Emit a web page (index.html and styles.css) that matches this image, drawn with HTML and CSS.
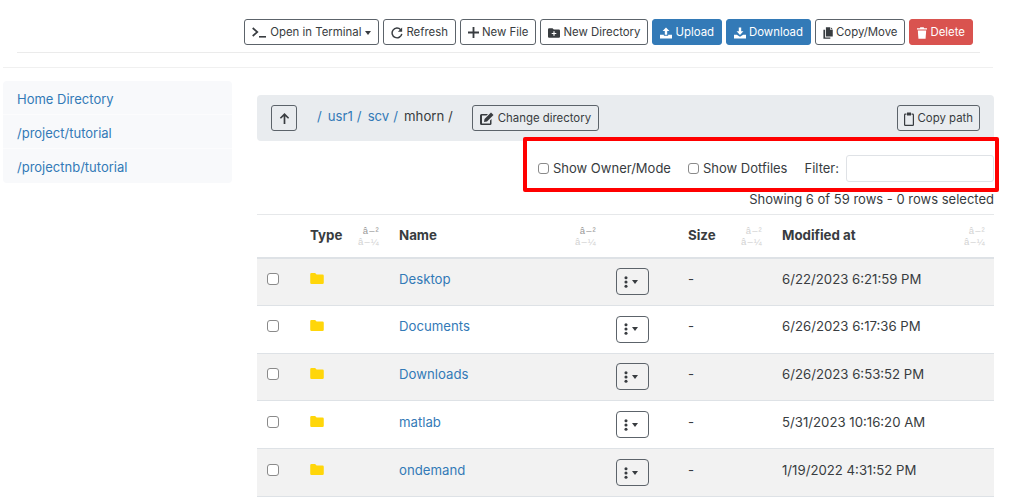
FILE: index.html
```html
<!DOCTYPE html>
<html lang="en">
<head>
<meta charset="utf-8">
<title>Files</title>
<link rel="stylesheet" href="styles.css">
</head>
<body>
<svg class="defs" width="0" height="0">
  <symbol id="folder" viewBox="0 0 16 13"><path d="M1.500 0h4.300l1.700 1.800h7A1.500 1.500 0 0 1 16 3.300v8.200a1.500 1.500 0 0 1-1.500 1.500h-13A1.500 1.500 0 0 1 0 11.500V1.500A1.500 1.500 0 0 1 1.500 0z"/></symbol>
  <symbol id="dots" viewBox="0 0 4 14"><circle cx="2" cy="2" r="1.800"/><circle cx="2" cy="7" r="1.800"/><circle cx="2" cy="12" r="1.800"/></symbol>
</svg>
<header class="toolbar">
  <button class="btn"><svg class="ico wide" viewBox="0 0 14 11"><path d="M.7 1l4.600 4-4.600 4" fill="none" stroke="currentColor" stroke-width="1.700"/><path d="M7 9h7v1.600H7z"/></svg>Open in Terminal<span class="caret"></span></button>
  <button class="btn"><svg class="ico" viewBox="0 0 14 14"><path d="M11.300 3.200A5.700 5.700 0 1 0 12.600 8" fill="none" stroke="currentColor" stroke-width="1.700"/><path d="M13 .5v5H8z"/></svg>Refresh</button>
  <button class="btn"><svg class="ico small" viewBox="0 0 12 12"><path d="M5 0h2v5h5v2H7v5H5V7H0V5h5z"/></svg>New File</button>
  <button class="btn"><svg class="ico" viewBox="0 0 14 12"><path fill-rule="evenodd" d="M1.300.5h4l1.400 1.500h6A1.300 1.300 0 0 1 14 3.300v7a1.300 1.300 0 0 1-1.300 1.300H1.300A1.300 1.300 0 0 1 0 10.300V1.800A1.300 1.300 0 0 1 1.300.5zM6.300 4v2h-2v1.300h2v2h1.400v-2h2V6h-2V4z"/></svg>New Directory</button>
  <button class="btn primary"><svg class="ico" viewBox="0 0 14 13"><path d="M7 0l4 4.200H8.400v4.300H5.600V4.200H3z"/><path d="M0 8.500h4.500v1.300h5V8.500H14V13H0z"/></svg>Upload</button>
  <button class="btn primary"><svg class="ico" viewBox="0 0 14 13"><path d="M5.600 0h2.800v4.600H11L7 8.800 3 4.600h2.600z"/><path d="M0 8.500h3.300L7 11l3.700-2.500H14V13H0z"/></svg>Download</button>
  <button class="btn"><svg class="ico narrow" viewBox="0 0 12 14"><path d="M3.500 0h5v3.200h3.200v8H3.500z"/><path d="M9.300 0l2.400 2.400H9.300z"/><path d="M.5 3h2v9.300h6.300V14H.5z"/></svg>Copy/Move</button>
  <button class="btn danger"><svg class="ico narrow" viewBox="0 0 12 14"><path d="M4 0h4l.6 1.300H12v1.600H0V1.300h3.400z"/><path d="M1 4h10l-.7 10H1.700z"/></svg>Delete</button>
</header>
<hr class="rule">
<div class="columns">
  <nav class="side">
    <a class="side-item" href="#">Home Directory</a>
    <a class="side-item" href="#">/project/tutorial</a>
    <a class="side-item" href="#">/projectnb/tutorial</a>
  </nav>
  <main class="main">
    <section class="crumbs">
      <button class="btn up"><svg class="ico solo" viewBox="0 0 12 13"><path d="M6 0l5.500 5.500-1.300 1.300L7 3.700V13H5V3.700L1.800 6.800.5 5.500z"/></svg></button>
      <ol class="path">
        <li><span class="sep">/</span></li>
        <li><a href="#">usr1</a><span class="sep">/</span></li>
        <li><a href="#">scv</a><span class="sep">/</span></li>
        <li>mhorn /</li>
      </ol>
      <button class="btn"><svg class="ico edit" viewBox="0 0 14 13"><path d="M1.500 2H8L6.500 3.500H2v8h8v-3L11.500 7v5A1.500 1.500 0 0 1 10 13H1.500A1.500 1.500 0 0 1 0 11.500v-8A1.500 1.500 0 0 1 1.500 2z"/><path d="M11 .5L13.500 3 7 9.500l-3 .5.5-3z"/></svg>Change directory</button>
      <button class="btn copy"><svg class="ico clip" viewBox="0 0 10 14"><path fill="none" stroke="currentColor" stroke-width="1.200" d="M2.500 2.200H1.300a.7.700 0 0 0-.7.700v9.800a.7.700 0 0 0 .7.700h7.400a.7.700 0 0 0 .7-.7V2.900a.7.700 0 0 0-.7-.7H7.500"/><path d="M3 .5h4v3H3z"/></svg>Copy path</button>
    </section>
    <div class="filters">
      <label class="check"><input type="checkbox">Show Owner/Mode</label>
      <label class="check"><input type="checkbox">Show Dotfiles</label>
      <label class="filter">Filter:<input type="text"></label>
      <div class="highlight"></div>
    </div>
    <p class="status">Showing 6 of 59 rows - 0 rows selected</p>
    <table class="files">
      <colgroup><col class="c1"><col class="c2"><col class="c3"><col class="c4"><col class="c5"><col class="c6"></colgroup>
      <thead>
        <tr>
          <th></th>
          <th><div class="th">Type<span class="sort"><b>â–²</b><i>â–¼</i></span></div></th>
          <th><div class="th">Name<span class="sort"><b>â–²</b><i>â–¼</i></span></div></th>
          <th></th>
          <th><div class="th">Size<span class="sort off"><b>â–²</b><i>â–¼</i></span></div></th>
          <th><div class="th">Modified at<span class="sort off"><b>â–²</b><i>â–¼</i></span></div></th>
        </tr>
      </thead>
      <tbody>
        <tr><td><input type="checkbox"></td><td><svg class="folder"><use href="#folder"/></svg></td><td><a href="#">Desktop</a></td><td><button class="btn more"><svg class="dots"><use href="#dots"/></svg><span class="caret"></span></button></td><td>-</td><td>6/22/2023 6:21:59 PM</td></tr>
        <tr><td><input type="checkbox"></td><td><svg class="folder"><use href="#folder"/></svg></td><td><a href="#">Documents</a></td><td><button class="btn more"><svg class="dots"><use href="#dots"/></svg><span class="caret"></span></button></td><td>-</td><td>6/26/2023 6:17:36 PM</td></tr>
        <tr><td><input type="checkbox"></td><td><svg class="folder"><use href="#folder"/></svg></td><td><a href="#">Downloads</a></td><td><button class="btn more"><svg class="dots"><use href="#dots"/></svg><span class="caret"></span></button></td><td>-</td><td>6/26/2023 6:53:52 PM</td></tr>
        <tr><td><input type="checkbox"></td><td><svg class="folder"><use href="#folder"/></svg></td><td><a href="#">matlab</a></td><td><button class="btn more"><svg class="dots"><use href="#dots"/></svg><span class="caret"></span></button></td><td>-</td><td>5/31/2023 10:16:20 AM</td></tr>
        <tr><td><input type="checkbox"></td><td><svg class="folder"><use href="#folder"/></svg></td><td><a href="#">ondemand</a></td><td><button class="btn more"><svg class="dots"><use href="#dots"/></svg><span class="caret"></span></button></td><td>-</td><td>1/19/2022 4:31:52 PM</td></tr>
      </tbody>
    </table>
  </main>
</div>
</body>
</html>
```
FILE: styles.css
```css
* { box-sizing: border-box; }
html, body { height: 100%; overflow: hidden; }
body {
  margin: 0;
  background: #fff;
  color: #383c40;
  font: 13px/1.4 Inter, "Liberation Sans", sans-serif;
}
a { color: #337ab7; text-decoration: none; }
.defs { position: absolute; }

.btn {
  display: inline-flex;
  align-items: center;
  height: 26px;
  padding: 1px 7px 0;
  background: #fff;
  border: 1px solid #5c636a;
  border-radius: 3px;
  color: #383c40;
  font: inherit;
  font-size: 11.400px;
  white-space: nowrap;
}
.btn.primary { background: #337ab7; border-color: #337ab7; color: #fff; }
.btn.danger { background: #d9534f; border-color: #d9534f; color: #fff; }
.ico { width: 12px; height: 12px; margin-right: 3px; fill: currentColor; flex: none; }
.ico.wide { width: 14px; height: 11px; margin-right: 4px; }
.ico.small { width: 11px; height: 11px; }
.ico.narrow { width: 10px; height: 12px; }
.ico.solo { margin: 0; width: 11px; height: 11px; }
.ico.edit { width: 14px; height: 13px; margin-right: 4px; }
.ico.clip { width: 10px; height: 14px; margin-right: 4px; }
.caret {
  width: 0; height: 0;
  margin-left: 4px;
  border-top: 4px solid currentColor;
  border-left: 3.500px solid transparent;
  border-right: 3.500px solid transparent;
}

.toolbar {
  display: flex;
  justify-content: flex-end;
  gap: 4px;
  height: 53px;
  width: 963px;
  margin-left: 17px;
  padding: 19px 7px 0 0;
  border-bottom: 1px solid #ebebeb;
}
.rule {
  height: 1px;
  width: 990px;
  margin: 14px 0 0 3px;
  border: 0;
  background: #f0f0f0;
}

.columns { display: flex; align-items: flex-start; padding: 13px 30px 0 3px; }
.side { width: 229px; flex: none; display: flex; flex-direction: column; margin-right: 25px; }
.side-item {
  height: 34px;
  padding: 3px 14px 0;
  background: #f8f9fb;
  border-bottom: 1px solid #fcfcfd;
  line-height: 30px;
  font-size: 13px;
}
.side-item:first-child { border-radius: 4px 4px 0 0; }
.side-item:last-child { border-radius: 0 0 4px 4px; border-bottom: 0; }

.main { flex: 1; margin-top: 14px; min-width: 0; }

.crumbs {
  display: flex;
  align-items: center;
  height: 46px;
  padding: 0 14px;
  background: #e9ecef;
  border-radius: 4px;
}
.up { width: 26px; padding: 0; justify-content: center; }
.crumbs .btn { background: transparent; }
.path {
  display: flex;
  gap: 6px;
  margin: 0 19px 0 20px;
  padding: 0 0 3px;
  list-style: none;
  font-size: 13.200px;
}
.path li { display: flex; gap: 4px; }
.sep { color: #337ab7; }
.copy { margin-left: auto; padding: 1px 6px 0; }

.filters {
  position: relative;
  display: flex;
  justify-content: flex-end;
  align-items: center;
  height: 41px;
  padding-top: 13px;
}
.check { display: flex; align-items: center; margin-right: 17px; font-size: 13px; }
.check input, td input {
  width: 11px; height: 11px;
  margin: 0 4px 0 0;
  appearance: none;
  background: #fff;
  border: 1px solid #8a8a8a;
  border-radius: 3px;
}
.filter { display: flex; align-items: center; gap: 7px; font-size: 13px; }
.filter input {
  width: 148px; height: 27px;
  border: 1px solid #dfe2e6;
  border-radius: 3px;
  background: #fff;
}
.highlight {
  position: absolute;
  left: 266px; right: -5px; top: -4px; bottom: -10px;
  border: 4px solid #f00;
  border-radius: 2px;
  pointer-events: none;
}

.status { margin: 8px 0 6px; text-align: right; line-height: 18px; font-size: 13px; }

.files { width: 737px; table-layout: fixed; border-collapse: collapse; font-size: 13.200px; }
.c1 { width: 42px; } .c2 { width: 89px; } .c3 { width: 217px; }
.c4 { width: 72px; } .c5 { width: 94px; } .c6 { width: 223px; }
.files thead tr { height: 43px; border-top: 1px solid #e6e8ea; border-bottom: 2px solid #dee2e6; }
th { padding: 0 8px 0 11px; text-align: left; font-size: 13.300px; font-weight: 700; color: #383c40; }
.th { display: flex; justify-content: space-between; align-items: center; }
.sort {
  display: flex;
  flex-direction: column;
  align-items: flex-end;
  font: 400 9.500px/11px "Liberation Sans", sans-serif;
  letter-spacing: 1.200px;
}
.sort b { font-weight: 400; color: #989898; }
.sort i { font-style: normal; color: #d2d2d2; }
.sort.off b { color: #d2d2d2; }
.files tbody tr { height: 47.800px; border-bottom: 1px solid #dee2e6; }
.files tbody tr:nth-child(odd) { background: #f2f2f2; }
td { padding: 0 0 5px 11px; vertical-align: middle; }
td input { display: block; width: 12px; height: 12px; margin: -1px 0 0 -1px; }
.folder { display: block; width: 14px; height: 11px; fill: #ffd60a; margin-top: -2px; }
.more { width: 33px; height: 27px; padding: 0 0 0 7px; background: transparent; margin-top: 5px; border-radius: 4px; display: flex; }
.dots { width: 4px; height: 12px; fill: #383c40; }
```
